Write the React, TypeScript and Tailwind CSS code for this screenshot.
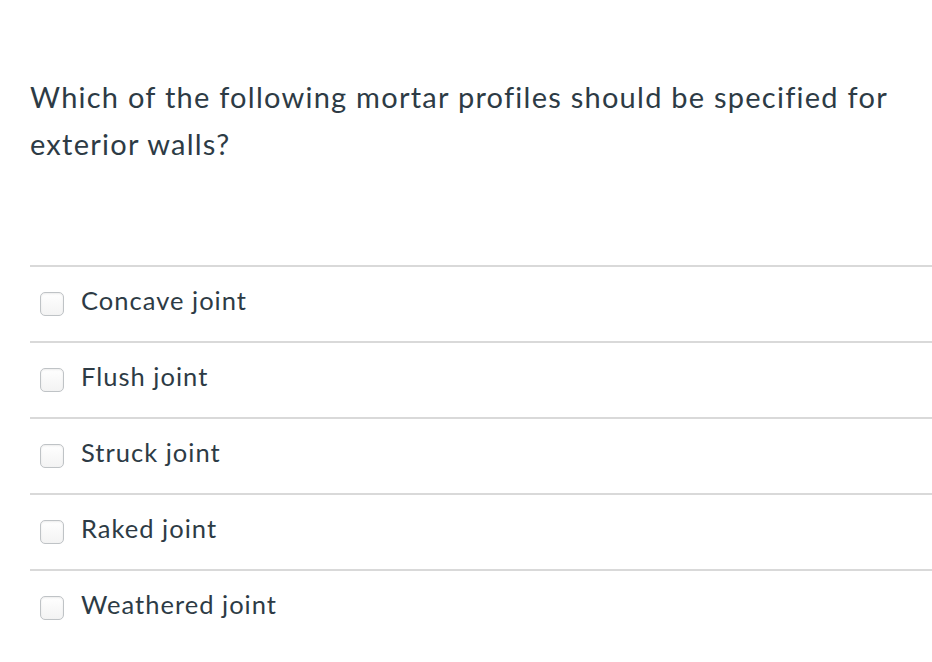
const OPTIONS = ["Concave joint", "Flush joint", "Struck joint", "Raked joint", "Weathered joint"];

export default function App() {
  return (
    <div
      className="min-h-screen w-full bg-white pl-[30px] pt-[73px] text-[#2d3b45]"
      style={{ fontFamily: "Lato, 'Open Sans', sans-serif" }}
    >
      <p className="pr-[30px] text-[29px] leading-[47px] tracking-[0.043em]">
        Which of the following mortar profiles should be specified for exterior walls?
      </p>

      <div className="mt-[98px]">
        {OPTIONS.map((o) => (
          <label key={o} className="flex h-[76px] items-center border-t-2 border-[#d9d9d9] pl-[10px]">
            <span className="h-[24px] w-[24px] shrink-0 rounded-[5px] border-[1.5px] border-[#bfc3c6] bg-gradient-to-b from-white to-[#f3f3f3] shadow-[inset_0_1px_2px_rgba(0,0,0,0.08)]" />
            <span className="ml-[17px] -translate-y-[3px] text-[25.5px] leading-none tracking-[0.04em]">{o}</span>
          </label>
        ))}
      </div>
    </div>
  );
}
